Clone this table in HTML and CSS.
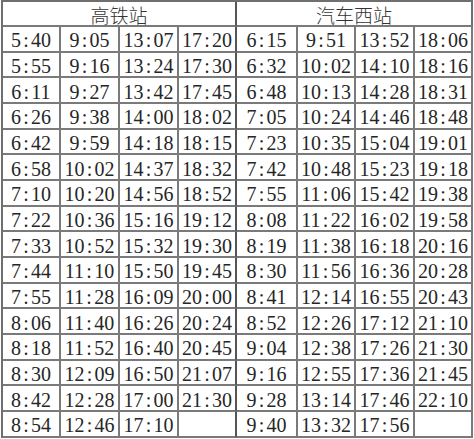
FILE: index.html
```html
<!DOCTYPE html>
<html lang="zh">
<head>
<meta charset="utf-8">
<title>时刻表</title>
<link rel="stylesheet" href="styles.css">
</head>
<body>
<div class="sheet">
  <div class="head">高铁站</div>
  <div class="head">汽车西站</div>

  <div class="c">5<span class="k">:</span>40</div><div class="c">9<span class="k">:</span>05</div><div class="c">13<span class="k">:</span>07</div><div class="c">17<span class="k">:</span>20</div>
  <div class="c">6<span class="k">:</span>15</div><div class="c">9<span class="k">:</span>51</div><div class="c">13<span class="k">:</span>52</div><div class="c">18<span class="k">:</span>06</div>

  <div class="c">5<span class="k">:</span>55</div><div class="c">9<span class="k">:</span>16</div><div class="c">13<span class="k">:</span>24</div><div class="c">17<span class="k">:</span>30</div>
  <div class="c">6<span class="k">:</span>32</div><div class="c">10<span class="k">:</span>02</div><div class="c">14<span class="k">:</span>10</div><div class="c">18<span class="k">:</span>16</div>

  <div class="c">6<span class="k">:</span>11</div><div class="c">9<span class="k">:</span>27</div><div class="c">13<span class="k">:</span>42</div><div class="c">17<span class="k">:</span>45</div>
  <div class="c">6<span class="k">:</span>48</div><div class="c">10<span class="k">:</span>13</div><div class="c">14<span class="k">:</span>28</div><div class="c">18<span class="k">:</span>31</div>

  <div class="c">6<span class="k">:</span>26</div><div class="c">9<span class="k">:</span>38</div><div class="c">14<span class="k">:</span>00</div><div class="c">18<span class="k">:</span>02</div>
  <div class="c">7<span class="k">:</span>05</div><div class="c">10<span class="k">:</span>24</div><div class="c">14<span class="k">:</span>46</div><div class="c">18<span class="k">:</span>48</div>

  <div class="c">6<span class="k">:</span>42</div><div class="c">9<span class="k">:</span>59</div><div class="c">14<span class="k">:</span>18</div><div class="c">18<span class="k">:</span>15</div>
  <div class="c">7<span class="k">:</span>23</div><div class="c">10<span class="k">:</span>35</div><div class="c">15<span class="k">:</span>04</div><div class="c">19<span class="k">:</span>01</div>

  <div class="c">6<span class="k">:</span>58</div><div class="c">10<span class="k">:</span>02</div><div class="c">14<span class="k">:</span>37</div><div class="c">18<span class="k">:</span>32</div>
  <div class="c">7<span class="k">:</span>42</div><div class="c">10<span class="k">:</span>48</div><div class="c">15<span class="k">:</span>23</div><div class="c">19<span class="k">:</span>18</div>

  <div class="c">7<span class="k">:</span>10</div><div class="c">10<span class="k">:</span>20</div><div class="c">14<span class="k">:</span>56</div><div class="c">18<span class="k">:</span>52</div>
  <div class="c">7<span class="k">:</span>55</div><div class="c">11<span class="k">:</span>06</div><div class="c">15<span class="k">:</span>42</div><div class="c">19<span class="k">:</span>38</div>

  <div class="c">7<span class="k">:</span>22</div><div class="c">10<span class="k">:</span>36</div><div class="c">15<span class="k">:</span>16</div><div class="c">19<span class="k">:</span>12</div>
  <div class="c">8<span class="k">:</span>08</div><div class="c">11<span class="k">:</span>22</div><div class="c">16<span class="k">:</span>02</div><div class="c">19<span class="k">:</span>58</div>

  <div class="c">7<span class="k">:</span>33</div><div class="c">10<span class="k">:</span>52</div><div class="c">15<span class="k">:</span>32</div><div class="c">19<span class="k">:</span>30</div>
  <div class="c">8<span class="k">:</span>19</div><div class="c">11<span class="k">:</span>38</div><div class="c">16<span class="k">:</span>18</div><div class="c">20<span class="k">:</span>16</div>

  <div class="c">7<span class="k">:</span>44</div><div class="c">11<span class="k">:</span>10</div><div class="c">15<span class="k">:</span>50</div><div class="c">19<span class="k">:</span>45</div>
  <div class="c">8<span class="k">:</span>30</div><div class="c">11<span class="k">:</span>56</div><div class="c">16<span class="k">:</span>36</div><div class="c">20<span class="k">:</span>28</div>

  <div class="c">7<span class="k">:</span>55</div><div class="c">11<span class="k">:</span>28</div><div class="c">16<span class="k">:</span>09</div><div class="c">20<span class="k">:</span>00</div>
  <div class="c">8<span class="k">:</span>41</div><div class="c">12<span class="k">:</span>14</div><div class="c">16<span class="k">:</span>55</div><div class="c">20<span class="k">:</span>43</div>

  <div class="c">8<span class="k">:</span>06</div><div class="c">11<span class="k">:</span>40</div><div class="c">16<span class="k">:</span>26</div><div class="c">20<span class="k">:</span>24</div>
  <div class="c">8<span class="k">:</span>52</div><div class="c">12<span class="k">:</span>26</div><div class="c">17<span class="k">:</span>12</div><div class="c">21<span class="k">:</span>10</div>

  <div class="c">8<span class="k">:</span>18</div><div class="c">11<span class="k">:</span>52</div><div class="c">16<span class="k">:</span>40</div><div class="c">20<span class="k">:</span>45</div>
  <div class="c">9<span class="k">:</span>04</div><div class="c">12<span class="k">:</span>38</div><div class="c">17<span class="k">:</span>26</div><div class="c">21<span class="k">:</span>30</div>

  <div class="c">8<span class="k">:</span>30</div><div class="c">12<span class="k">:</span>09</div><div class="c">16<span class="k">:</span>50</div><div class="c">21<span class="k">:</span>07</div>
  <div class="c">9<span class="k">:</span>16</div><div class="c">12<span class="k">:</span>55</div><div class="c">17<span class="k">:</span>36</div><div class="c">21<span class="k">:</span>45</div>

  <div class="c">8<span class="k">:</span>42</div><div class="c">12<span class="k">:</span>28</div><div class="c">17<span class="k">:</span>00</div><div class="c">21<span class="k">:</span>30</div>
  <div class="c">9<span class="k">:</span>28</div><div class="c">13<span class="k">:</span>14</div><div class="c">17<span class="k">:</span>46</div><div class="c">22<span class="k">:</span>10</div>

  <div class="c">8<span class="k">:</span>54</div><div class="c">12<span class="k">:</span>46</div><div class="c">17<span class="k">:</span>10</div><div class="c"></div>
  <div class="c">9<span class="k">:</span>40</div><div class="c">13<span class="k">:</span>32</div><div class="c">17<span class="k">:</span>56</div><div class="c"></div>
</div>
</body>
</html>
```

FILE: styles.css
```css
html, body {
  margin: 0;
  padding: 0;
  background: #ffffff;
}

.sheet {
  display: grid;
  grid-template-columns: 58px 59px 59px 58px 61px 58px 59px 58px;
  grid-template-rows: 25px;
  grid-auto-rows: 25.67px;
  width: max-content;
  margin-left: 1px;
  border-left: 2px solid #6f6f6f;
  border-top: 2px solid #6f6f6f;
  color: #262626;
}

.head {
  grid-column: span 4;
  box-sizing: border-box;
  border-right: 2px solid #6f6f6f;
  border-bottom: 2px solid #7a7a7a;
  display: flex;
  align-items: center;
  justify-content: center;
  font-family: "Noto Sans CJK SC", sans-serif;
  font-weight: 300;
  font-size: 19px;
  line-height: 1;
  padding-top: 2px;
  color: #333333;
}

.head:nth-child(1) {
  border-right-color: #555555;
}

.c {
  box-sizing: border-box;
  border-right: 2px solid #7a7a7a;
  border-bottom: 2px solid #7a7a7a;
  display: flex;
  align-items: center;
  justify-content: center;
  font-family: "Liberation Serif", serif;
  font-size: 20px;
  line-height: 1;
  padding-top: 3px;
  white-space: nowrap;
}

.c:nth-child(8n+6) {
  border-right-color: #555555;
}

.k {
  display: inline-block;
  width: 10px;
  text-align: center;
}
```
